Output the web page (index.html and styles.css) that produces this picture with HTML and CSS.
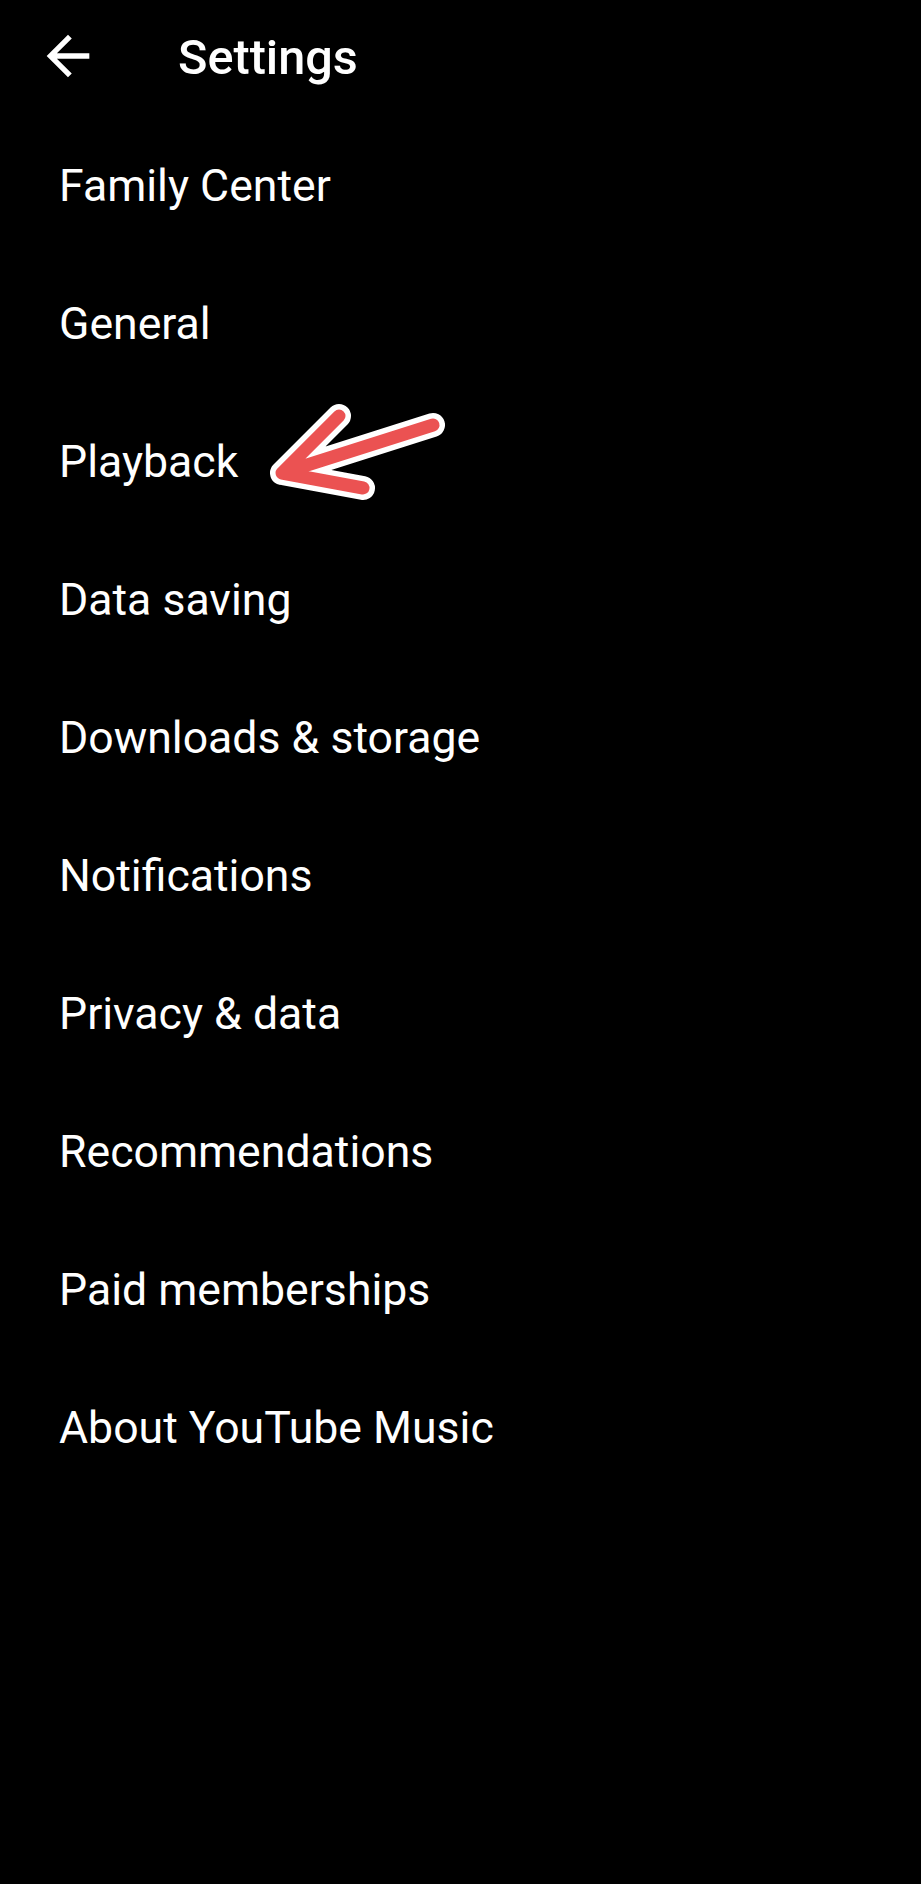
FILE: index.html
```html
<!DOCTYPE html>
<html lang="en">
<head>
<meta charset="utf-8">
<title>Settings</title>
<link rel="stylesheet" href="styles.css">
</head>
<body>
<div class="screen">
  <header class="topbar">
    <button class="back" aria-label="Back">
      <svg viewBox="0 0 24 24" width="64" height="64"><path d="M20 11H7.83l5.59-5.59L12 4l-8 8 8 8 1.41-1.41L7.83 13H20v-2z" fill="#fff"/></svg>
    </button>
    <h1 class="title">Settings</h1>
  </header>
  <ul class="menu">
    <li class="item">Family Center</li>
    <li class="item">General</li>
    <li class="item">Playback</li>
    <li class="item">Data saving</li>
    <li class="item">Downloads &amp; storage</li>
    <li class="item">Notifications</li>
    <li class="item">Privacy &amp; data</li>
    <li class="item">Recommendations</li>
    <li class="item">Paid memberships</li>
    <li class="item">About YouTube Music</li>
  </ul>
  <svg class="annotation" width="921" height="1884" viewBox="0 0 921 1884">
    <g fill="none" stroke-linecap="round" stroke-linejoin="round">
      <path d="M339 416 L282 473 L363 488 M282 473 L433 425" stroke="#fff" stroke-width="24"/>
      <path d="M339 416 L282 473 L363 488 M282 473 L433 425" stroke="#eb5252" stroke-width="13"/>
    </g>
  </svg>
</div>
</body>
</html>
```
FILE: styles.css
```css
html, body {
  margin: 0;
  padding: 0;
  background: #000;
}
.screen {
  position: relative;
  width: 921px;
  min-height: 1884px;
  background: #000;
  color: #fff;
  font-family: Roboto, "Noto Sans", "Liberation Sans", sans-serif;
}
.topbar {
  display: flex;
  align-items: center;
  height: 112px;
  padding-left: 36px;
  gap: 78px;
  box-sizing: border-box;
}
.back {
  display: flex;
  width: 64px;
  height: 64px;
  padding: 0;
  border: 0;
  background: none;
}
.title {
  margin: 3px 0 0 0;
  font-size: 48.6px;
  font-weight: 500;
  color: #fff;
}
.menu {
  list-style: none;
  margin: 0;
  padding: 5px 0 0 0;
}
.item {
  height: 138px;
  line-height: 138px;
  padding-left: 59px;
  font-size: 44.6px;
  font-weight: 400;
  color: #fff;
}
.annotation {
  position: absolute;
  left: 0;
  top: 0;
  pointer-events: none;
}
```
